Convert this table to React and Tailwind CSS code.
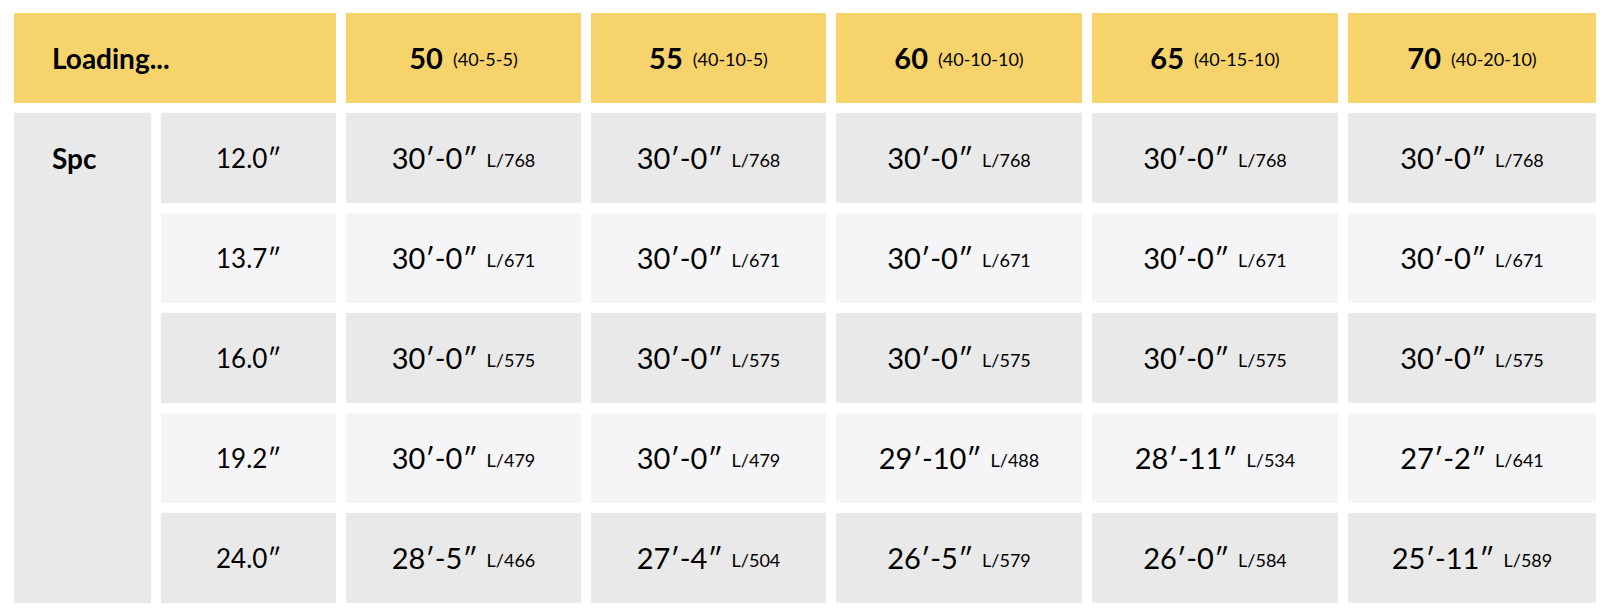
const loads = [
  { psf: '50', mix: '(40-5-5)' },
  { psf: '55', mix: '(40-10-5)' },
  { psf: '60', mix: '(40-10-10)' },
  { psf: '65', mix: '(40-15-10)' },
  { psf: '70', mix: '(40-20-10)' },
];

const rows = [
  { spacing: '12.0″', spans: [['30′-0″', 'L/768'], ['30′-0″', 'L/768'], ['30′-0″', 'L/768'], ['30′-0″', 'L/768'], ['30′-0″', 'L/768']] },
  { spacing: '13.7″', spans: [['30′-0″', 'L/671'], ['30′-0″', 'L/671'], ['30′-0″', 'L/671'], ['30′-0″', 'L/671'], ['30′-0″', 'L/671']] },
  { spacing: '16.0″', spans: [['30′-0″', 'L/575'], ['30′-0″', 'L/575'], ['30′-0″', 'L/575'], ['30′-0″', 'L/575'], ['30′-0″', 'L/575']] },
  { spacing: '19.2″', spans: [['30′-0″', 'L/479'], ['30′-0″', 'L/479'], ['29′-10″', 'L/488'], ['28′-11″', 'L/534'], ['27′-2″', 'L/641']] },
  { spacing: '24.0″', spans: [['28′-5″', 'L/466'], ['27′-4″', 'L/504'], ['26′-5″', 'L/579'], ['26′-0″', 'L/584'], ['25′-11″', 'L/589']] },
];

export default function App() {
  return (
    <div className="min-h-[614px] bg-white pt-[13px] pl-[14px] text-black font-['Lato',sans-serif]">
      <div className="grid grid-cols-[137px_175px_235px_235px_246px_246px_248px] auto-rows-[90px] gap-[10px] w-[1582px]">
        {/* Header */}
        <div className="col-span-2 bg-[#f7d36b] flex items-center pl-[38px] text-[28px] font-bold">
          Loading...
        </div>
        {loads.map((l) => (
          <div key={l.psf} className="bg-[#f7d36b] flex items-center justify-center">
            <span className="text-[29px] font-bold">{l.psf}</span>
            <span className="ml-[10px] text-[18px] pt-[2px]">{l.mix}</span>
          </div>
        ))}

        {/* Spc label */}
        <div className="row-span-5 bg-[#e9e9e9]">
          <div className="h-[90px] flex items-center pl-[38px] text-[28px] font-bold">Spc</div>
        </div>

        {rows.map((r, i) => {
          const bg = i % 2 === 0 ? 'bg-[#e9e9e9]' : 'bg-[#f5f5f7]';
          return [
            <div key={r.spacing} className={`${bg} flex items-center justify-center text-[26px]`}>
              {r.spacing}
            </div>,
            ...r.spans.map((s, j) => (
              <div key={r.spacing + j} className={`${bg} flex items-center justify-center`}>
                <span className="text-[29px]">{s[0]}</span>
                <span className="ml-[9px] text-[18px] pt-[4px]">{s[1]}</span>
              </div>
            )),
          ];
        })}
      </div>
    </div>
  );
}
